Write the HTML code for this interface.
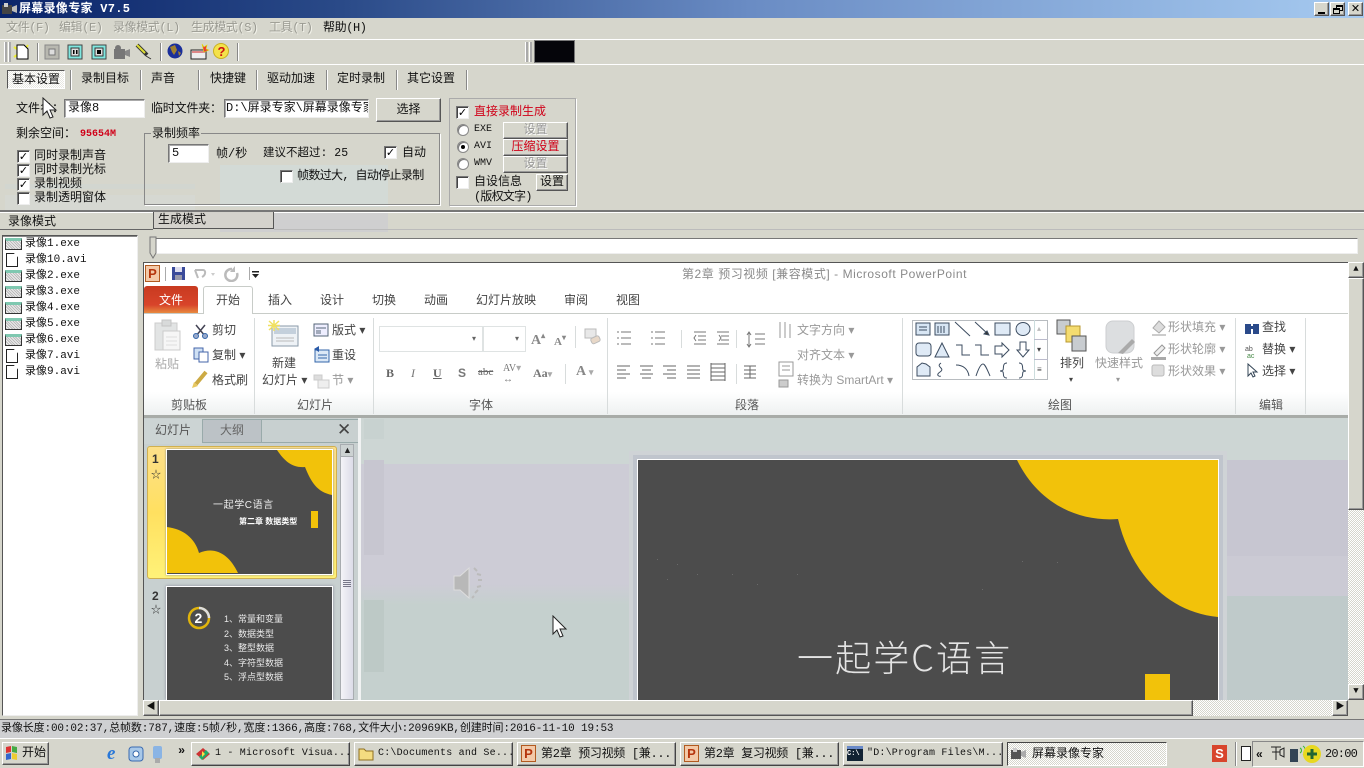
<!DOCTYPE html>
<html><head><meta charset="utf-8"><style>
*{box-sizing:border-box}
html,body{margin:0;padding:0;width:1364px;height:768px;overflow:hidden;background:#d6d6cc}
body{position:relative;font:12px "Liberation Mono","WenQuanYi Zen Hei","Noto Sans CJK SC",monospace;color:#111}
.a,.t{position:absolute}
.t{white-space:nowrap;line-height:14px}
.g{color:#9a9a92;text-shadow:1px 1px 0 #f2f2ea;letter-spacing:-.4px}
.r{color:#d00018}
.s{font-family:"Liberation Sans","Noto Sans CJK SC",sans-serif;color:#444;line-height:14px;position:absolute;white-space:nowrap}
.l{color:#999}
.btn{position:absolute;background:#d6d6cc;border:1px solid;border-color:#fff #555 #555 #fff;box-shadow:inset -1px -1px 0 #999;text-align:center}
.in{position:absolute;background:#fff;border:1px solid;border-color:#777 #eee #eee #777;box-shadow:inset 1px 1px 0 #aaa;padding-left:3px;line-height:16px}
.cb{position:absolute;width:13px;height:13px;background:#fff;border:1px solid;border-color:#777 #eee #eee #777;box-shadow:inset 1px 1px 0 #444;font:bold 11px/11px "DejaVu Sans",sans-serif;text-align:center;color:#000}
.rd{position:absolute;width:12px;height:12px;border-radius:50%;background:#fff;border:1px solid #888;box-shadow:inset 1px 1px 0 #777}
.sep{position:absolute;width:1px;background:#888;box-shadow:1px 0 0 #fff}
.tb{position:absolute;top:742px;height:24px;background:#d6d6cc;border:1px solid;border-color:#fff #444 #444 #fff;box-shadow:inset -1px -1px 0 #999;line-height:22px;padding-left:23px;white-space:nowrap;font-size:12px;letter-spacing:-.3px;overflow:hidden}
.tl{font-size:10px;letter-spacing:.2px}
.gh{position:absolute}
.li{position:absolute;left:25px;height:14px;line-height:14px;font-size:11px;white-space:nowrap}
.ie{position:absolute;left:5px;width:17px;height:12px;border:1px solid #333;border-top:3px solid #7fc8b0;background:repeating-linear-gradient(45deg,#bbb 0 1px,#eee 1px 2px)}
.id{position:absolute;left:6px;width:12px;height:14px;border:1px solid #222;background:#fff;clip-path:polygon(0 0,65% 0,100% 30%,100% 100%,0 100%)}
</style></head><body>

<!-- ghost bits behind the panel -->
<div class="gh" style="left:5px;top:184px;width:190px;height:5px;background:#d2d6d0"></div>
<div class="gh" style="left:5px;top:195px;width:190px;height:15px;background:#d6d8d2"></div>
<div class="gh" style="left:220px;top:165px;width:168px;height:42px;background:#d3dad6"></div>
<div class="gh" style="left:220px;top:212px;width:168px;height:20px;background:#cfcfd0"></div>

<!-- title bar -->
<div class="a" style="left:0;top:0;width:1364px;height:18px;background:linear-gradient(90deg,#0a246a 0,#2a4a88 25%,#6a8cc4 55%,#a6caf0 100%)"></div>
<svg class="a" style="left:1px;top:1px" width="17" height="16"><rect x="1" y="4" width="10" height="9" fill="#444"/><rect x="3" y="2" width="4" height="4" fill="#ccc"/><path d="M11 6l5-2v8l-5-2z" fill="#bbb"/></svg>
<div class="t" style="left:19px;top:2px;color:#fff;font-weight:bold;font-size:12px;letter-spacing:.3px">屏幕录像专家 V7.5</div>
<div class="btn" style="left:1314px;top:2px;width:15px;height:14px"><div class="a" style="left:3px;top:9px;width:7px;height:2px;background:#000"></div></div>
<div class="btn" style="left:1330px;top:2px;width:15px;height:14px"><div class="a" style="left:5px;top:2px;width:7px;height:6px;border:1px solid #000;border-top-width:2px"></div><div class="a" style="left:2px;top:5px;width:7px;height:6px;border:1px solid #000;border-top-width:2px;background:#d6d6cc"></div></div>
<div class="btn" style="left:1348px;top:2px;width:15px;height:14px;font:bold 11px/12px 'DejaVu Sans',sans-serif;color:#000">✕</div>

<!-- menu -->
<div class="t g" style="left:6px;top:21px">文件(F)</div>
<div class="t g" style="left:59px;top:21px">编辑(E)</div>
<div class="t g" style="left:113px;top:21px">录像模式(L)</div>
<div class="t g" style="left:191px;top:21px">生成模式(S)</div>
<div class="t g" style="left:269px;top:21px">工具(T)</div>
<div class="t" style="left:323px;top:21px;letter-spacing:-.4px">帮助(H)</div>

<!-- toolbar -->
<div class="a" style="left:0;top:39px;width:1364px;height:1px;background:#fff"></div>
<div class="a" style="left:0;top:64px;width:1364px;height:1px;background:#fff"></div>
<div class="a" style="left:5px;top:42px;width:2px;height:20px;background:#aaa;box-shadow:-1px 0 0 #fff"></div>
<div class="a" style="left:9px;top:42px;width:2px;height:20px;background:#aaa;box-shadow:-1px 0 0 #fff"></div>
<svg class="a" style="left:12px;top:42px" width="220" height="20">
<path d="M2 5l3 2M2 15l3-2M16 3l-2 3" stroke="#ee3" stroke-width="2"/><path d="M5 3h7l4 4v10H5z" fill="#fff" stroke="#000"/>
<rect x="33" y="3" width="14" height="14" fill="#b8b8b0" stroke="#888"/><rect x="37" y="7" width="6" height="6" fill="#ddd" stroke="#777"/>
<rect x="56" y="3" width="14" height="14" fill="#7fe8e0" stroke="#444"/><rect x="59" y="6" width="8" height="8" fill="#ddd" stroke="#333"/><rect x="61" y="8" width="1.5" height="4" fill="#000"/><rect x="64" y="8" width="1.5" height="4" fill="#000"/>
<rect x="80" y="3" width="14" height="14" fill="#7fe8e0" stroke="#444"/><rect x="83" y="6" width="8" height="8" fill="#ddd" stroke="#333"/><rect x="85" y="8" width="4" height="4" fill="#000"/>
<rect x="102" y="7" width="11" height="10" fill="#777"/><circle cx="106" cy="6" r="3" fill="#777"/><path d="M113 9l5-2v8l-5-2z" fill="#888"/>
<path d="M125 3l10 10" stroke="#333" stroke-width="4"/><path d="M125 3l8 8" stroke="#dd3" stroke-width="2"/><path d="M134 14l5 3" stroke="#333"/>
<circle cx="163" cy="9" r="7.5" fill="#1a2e9a"/><path d="M158 5l5-2 2 5-3 5-2-3zM166 9l3 2-2 3z" fill="#a08030"/>
<rect x="179" y="8" width="15" height="9" fill="#eee" stroke="#222"/><path d="M180 10h13" stroke="#c22"/><path d="M190 2l2 3 3-2-1 4 3 1-5 2z" fill="#e33" stroke="#dd0" stroke-width=".6"/>
<circle cx="209" cy="9" r="7.5" fill="#f4e24a" stroke="#c8b020"/><text x="205.5" y="14" font-family="Liberation Sans" font-weight="bold" font-size="13" fill="#c11">?</text>
</svg>
<div class="sep" style="left:37px;top:43px;height:18px"></div>
<div class="sep" style="left:160px;top:43px;height:18px"></div>
<div class="sep" style="left:237px;top:43px;height:18px"></div>
<div class="a" style="left:526px;top:42px;width:2px;height:20px;background:#aaa;box-shadow:-1px 0 0 #fff"></div>
<div class="a" style="left:530px;top:42px;width:2px;height:20px;background:#aaa;box-shadow:-1px 0 0 #fff"></div>
<div class="a" style="left:534px;top:40px;width:41px;height:23px;background:#05050a;border:1px solid #777"></div>

<!-- tabs -->
<div class="a" style="left:7px;top:70px;width:58px;height:19px;background:repeating-conic-gradient(#e8e8e2 0 25%,#fff 0 50%) 0 0/2px 2px;border:1px solid;border-color:#555 #fff #fff #555"></div>
<div class="t" style="left:12px;top:73px">基本设置</div>
<div class="t" style="left:81px;top:72px">录制目标</div>
<div class="t" style="left:151px;top:72px">声音</div>
<div class="t" style="left:210px;top:72px">快捷键</div>
<div class="t" style="left:267px;top:72px">驱动加速</div>
<div class="t" style="left:337px;top:72px">定时录制</div>
<div class="t" style="left:407px;top:72px">其它设置</div>
<div class="sep" style="left:70px;top:70px;height:20px"></div>
<div class="sep" style="left:140px;top:70px;height:20px"></div>
<div class="sep" style="left:198px;top:70px;height:20px"></div>
<div class="sep" style="left:256px;top:70px;height:20px"></div>
<div class="sep" style="left:326px;top:70px;height:20px"></div>
<div class="sep" style="left:396px;top:70px;height:20px"></div>
<div class="sep" style="left:466px;top:70px;height:20px"></div>

<!-- form -->
<div class="t" style="left:16px;top:102px">文件名：</div>
<div class="in" style="left:64px;top:99px;width:81px;height:19px">录像8</div>
<div class="t" style="left:151px;top:102px;letter-spacing:-.2px">临时文件夹：</div>
<div class="in" style="left:224px;top:99px;width:145px;height:19px;overflow:hidden;white-space:nowrap;padding-left:1px">D:\屏录专家\屏幕录像专家</div>
<div class="btn" style="left:376px;top:98px;width:65px;height:24px;line-height:22px">选择</div>
<svg class="a" style="left:42px;top:97px" width="16" height="24"><path d="M1 1v17l4-4 3 7 3-1-3-7h6z" fill="#fff" stroke="#222"/></svg>

<div class="t" style="left:16px;top:127px">剩余空间：</div>
<div class="t r" style="left:80px;top:128px;font-size:10px;font-weight:bold">95654M</div>

<div class="cb" style="left:17px;top:150px">✓</div><div class="t" style="left:34px;top:149px">同时录制声音</div>
<div class="cb" style="left:17px;top:164px">✓</div><div class="t" style="left:34px;top:163px">同时录制光标</div>
<div class="cb" style="left:17px;top:178px">✓</div><div class="t" style="left:34px;top:177px">录制视频</div>
<div class="cb" style="left:17px;top:192px"></div><div class="t" style="left:34px;top:191px">录制透明窗体</div>

<div class="a" style="left:144px;top:133px;width:296px;height:72px;border:1px solid #888;box-shadow:1px 1px 0 #fff"></div>
<div class="t" style="left:151px;top:127px;background:#d6d6cc;padding:0 1px">录制频率</div>
<div class="in" style="left:168px;top:144px;width:41px;height:19px">5</div>
<div class="t" style="left:216px;top:147px">帧/秒</div>
<div class="t" style="left:263px;top:147px;font-size:11.5px">建议不超过: 25</div>
<div class="cb" style="left:384px;top:146px">✓</div><div class="t" style="left:402px;top:146px">自动</div>
<div class="cb" style="left:280px;top:170px"></div><div class="t" style="left:297px;top:169px;letter-spacing:-.65px">帧数过大, 自动停止录制</div>

<div class="a" style="left:449px;top:98px;width:127px;height:108px;border:1px solid #aaa;box-shadow:1px 1px 0 #fff"></div>
<div class="cb" style="left:456px;top:106px">✓</div><div class="t r" style="left:474px;top:105px">直接录制生成</div>
<div class="rd" style="left:457px;top:124px"></div><div class="t" style="left:474px;top:123px;font-size:10px">EXE</div>
<div class="btn" style="left:503px;top:122px;width:65px;height:17px;line-height:15px;color:#999;text-shadow:1px 1px 0 #fff">设置</div>
<div class="rd" style="left:457px;top:141px"></div><div class="a" style="left:461px;top:145px;width:4px;height:4px;border-radius:50%;background:#000"></div><div class="t" style="left:474px;top:140px;font-size:10px">AVI</div>
<div class="btn r" style="left:503px;top:139px;width:65px;height:17px;line-height:15px">压缩设置</div>
<div class="rd" style="left:457px;top:158px"></div><div class="t" style="left:474px;top:157px;font-size:10px">WMV</div>
<div class="btn" style="left:503px;top:156px;width:65px;height:17px;line-height:15px;color:#999;text-shadow:1px 1px 0 #fff">设置</div>
<div class="cb" style="left:456px;top:176px"></div><div class="t" style="left:474px;top:175px">自设信息</div>
<div class="btn" style="left:536px;top:174px;width:32px;height:17px;line-height:15px">设置</div>
<div class="t" style="left:474px;top:190px;letter-spacing:-.8px">(版权文字)</div>

<!-- panel tabs -->
<div class="a" style="left:0;top:210px;width:1364px;height:2px;background:#777;box-shadow:0 1px 0 #fff"></div>
<div class="a" style="left:153px;top:212px;width:121px;height:17px;border:1px solid #555;border-top:0;background:#d4d2cc"></div>
<div class="t" style="left:158px;top:213px">生成模式</div>
<div class="t" style="left:8px;top:215px">录像模式</div>
<div class="a" style="left:0;top:229px;width:153px;height:1px;background:#666"></div>
<div class="a" style="left:274px;top:229px;width:1090px;height:1px;background:#bbb"></div>

<!-- left list -->
<div class="a" style="left:2px;top:235px;width:136px;height:481px;background:#fff;border:1px solid;border-color:#555 #eee #eee #555;box-shadow:inset 0 1px 0 #888"></div>
<div class="ie" style="top:238px"></div><div class="li" style="top:237px">录像1.exe</div>
<div class="id" style="top:253px"></div><div class="li" style="top:253px">录像10.avi</div>
<div class="ie" style="top:270px"></div><div class="li" style="top:269px">录像2.exe</div>
<div class="ie" style="top:286px"></div><div class="li" style="top:285px">录像3.exe</div>
<div class="ie" style="top:302px"></div><div class="li" style="top:301px">录像4.exe</div>
<div class="ie" style="top:318px"></div><div class="li" style="top:317px">录像5.exe</div>
<div class="ie" style="top:334px"></div><div class="li" style="top:333px">录像6.exe</div>
<div class="id" style="top:349px"></div><div class="li" style="top:349px">录像7.avi</div>
<div class="id" style="top:365px"></div><div class="li" style="top:365px">录像9.avi</div>

<!-- timeline -->
<div class="a" style="left:155px;top:238px;width:1203px;height:16px;background:#fff;border:1px solid;border-color:#777 #eee #eee #777"></div>
<svg class="a" style="left:149px;top:236px" width="9" height="24"><path d="M1 1h6v16l-3 5-3-5z" fill="#d6d6cc" stroke="#777"/></svg>

<!-- PowerPoint window -->
<div class="a" style="left:143px;top:262px;width:1205px;height:438px;background:#ccd4d4;border-left:1px solid #555;border-top:1px solid #555"></div>
<div class="a" style="left:144px;top:263px;width:1204px;height:152px;background:#fff"></div>
<div class="a" style="left:144px;top:415px;width:1204px;height:3px;background:#a8aca8"></div>

<!-- QAT -->
<div class="a" style="left:145px;top:265px;width:15px;height:17px;background:#f3c9a8;border:1px solid #b25a20;color:#b5340c;font:bold 13px/15px 'Liberation Sans',sans-serif;text-align:center">P</div>
<div class="a" style="left:165px;top:267px;width:1px;height:14px;background:#aaa"></div>
<svg class="a" style="left:171px;top:265px" width="90" height="17">
<rect x="1" y="2" width="13" height="13" fill="#3a4a9a"/><rect x="4" y="2" width="7" height="5" fill="#dde"/><rect x="4" y="10" width="7" height="5" fill="#99a"/>
<path d="M24 5l3 8M24 5h8c3 0 3 5-1 7" stroke="#bbb" stroke-width="2" fill="none"/><path d="M40 8l2 3 2-3z" fill="#ccc"/>
<path d="M61 4a6 6 0 1 0 5 4" stroke="#bbb" stroke-width="2.5" fill="none"/><path d="M64 1v6h-5z" fill="#bbb"/>
<rect x="78" y="2" width="1" height="13" fill="#aaa"/><rect x="81" y="6" width="7" height="1.5" fill="#222"/><path d="M81 9h7l-3.500 4z" fill="#222"/>
</svg>
<div class="s" style="left:682px;top:267px;color:#8a8a8a;font-size:12px;letter-spacing:.55px">第2章 预习视频 [兼容模式]  -  Microsoft PowerPoint</div>

<!-- ribbon tabs -->
<div class="a" style="left:144px;top:286px;width:54px;height:27px;border-radius:3px 3px 0 0;background:linear-gradient(#c83a20,#d8442a 70%,#e88a40)"></div>
<div class="s" style="left:159px;top:293px;color:#fff">文件</div>
<div class="a" style="left:144px;top:313px;width:1204px;height:1px;background:#c8ccc8"></div>
<div class="a" style="left:203px;top:286px;width:50px;height:28px;background:#fff;border:1px solid #c8ccc8;border-bottom:0;border-radius:3px 3px 0 0"></div>
<div class="s" style="left:216px;top:293px">开始</div>
<div class="s" style="left:268px;top:293px">插入</div>
<div class="s" style="left:320px;top:293px">设计</div>
<div class="s" style="left:372px;top:293px">切换</div>
<div class="s" style="left:424px;top:293px">动画</div>
<div class="s" style="left:476px;top:293px">幻灯片放映</div>
<div class="s" style="left:564px;top:293px">审阅</div>
<div class="s" style="left:616px;top:293px">视图</div>

<!-- ribbon group labels -->
<div class="a" style="left:144px;top:392px;width:1204px;height:23px;background:linear-gradient(#fff,#eef1f1)"></div>
<div class="s" style="left:171px;top:398px;color:#555">剪贴板</div>
<div class="s" style="left:297px;top:398px;color:#555">幻灯片</div>
<div class="s" style="left:469px;top:398px;color:#555">字体</div>
<div class="s" style="left:735px;top:398px;color:#555">段落</div>
<div class="s" style="left:1048px;top:398px;color:#555">绘图</div>
<div class="s" style="left:1259px;top:398px;color:#555">编辑</div>
<div class="a" style="left:254px;top:318px;width:1px;height:96px;background:#d8dcdc"></div>
<div class="a" style="left:373px;top:318px;width:1px;height:96px;background:#d8dcdc"></div>
<div class="a" style="left:607px;top:318px;width:1px;height:96px;background:#d8dcdc"></div>
<div class="a" style="left:902px;top:318px;width:1px;height:96px;background:#d8dcdc"></div>
<div class="a" style="left:1235px;top:318px;width:1px;height:96px;background:#d8dcdc"></div>
<div class="a" style="left:1305px;top:318px;width:1px;height:96px;background:#d8dcdc"></div>

<!-- clipboard -->
<svg class="a" style="left:150px;top:318px" width="36" height="36"><rect x="5" y="5" width="22" height="27" fill="#e2e4e4" stroke="#ccc"/><rect x="12" y="2" width="9" height="6" fill="#d8dada" stroke="#c4c4c4"/><rect x="13" y="13" width="17" height="19" fill="#f6f6f6" stroke="#ccc"/><path d="M16 19h11M16 23h11M16 27h11" stroke="#ddd"/></svg>
<div class="s l" style="left:155px;top:357px;color:#aaa">粘贴</div>
<svg class="a" style="left:191px;top:321px" width="20" height="72" fill="none"><path d="M5 4l9 11M14 4L5 15" stroke="#445" stroke-width="1.500"/><circle cx="5" cy="15" r="2.500" stroke="#36a" fill="#9ac"/><circle cx="14" cy="15" r="2.500" stroke="#36a" fill="#9ac"/><rect x="3" y="27" width="9" height="11" fill="#cfe0f4" stroke="#46a"/><rect x="8" y="31" width="9" height="10" fill="#fff" stroke="#46a"/><path d="M15 51L5 63" stroke="#ca4" stroke-width="4"/><path d="M3 61l4 4-6 2z" fill="#e8c860"/></svg>
<div class="s" style="left:212px;top:323px">剪切</div>
<div class="s" style="left:212px;top:348px">复制 ▾</div>
<div class="s" style="left:212px;top:373px">格式刷</div>

<!-- slides -->
<svg class="a" style="left:268px;top:320px" width="32" height="30"><rect x="4" y="6" width="26" height="20" fill="#eef2f6" stroke="#8a9aa8"/><rect x="6" y="8" width="22" height="6" fill="#c4d0dc"/><path d="M8 18h18M8 21h18" stroke="#bbb"/><path d="M1 1l10 9M11 1L1 10M6 0v11M0 5.500h12" stroke="#f0e060" stroke-width="1.500"/></svg>
<div class="s" style="left:272px;top:356px">新建</div>
<div class="s" style="left:262px;top:373px">幻灯片 ▾</div>
<svg class="a" style="left:313px;top:322px" width="18" height="68" fill="none"><rect x="1" y="2" width="14" height="12" fill="#eef" stroke="#567"/><path d="M3 6h10M3 9h5M3 11h5" stroke="#567"/><rect x="2" y="28" width="14" height="12" fill="#dbe8f6" stroke="#36a"/><path d="M1 27l5-3v6z" fill="#2a5aa8"/><path d="M5 33h9M5 36h9" stroke="#36a"/><rect x="1" y="53" width="8" height="5" fill="#ddd" stroke="#ccc"/><rect x="5" y="58" width="11" height="8" fill="#eee" stroke="#ccc"/></svg>
<div class="s" style="left:332px;top:323px">版式 ▾</div>
<div class="s" style="left:332px;top:348px">重设</div>
<div class="s l" style="left:332px;top:373px">节 ▾</div>

<!-- font -->
<div class="a" style="left:379px;top:326px;width:104px;height:26px;border:1px solid #dfe3e3"></div>
<div class="a" style="left:483px;top:326px;width:43px;height:26px;border:1px solid #dfe3e3"></div>
<div class="s" style="left:472px;top:332px;font-size:8px;color:#666">▾</div>
<div class="s" style="left:515px;top:332px;font-size:8px;color:#666">▾</div>
<div class="s" style="left:531px;top:331px;font:bold 14px 'Liberation Serif',serif;color:#888">A<span style="font-size:8px;vertical-align:6px">▴</span></div>
<div class="s" style="left:554px;top:333px;font:bold 11px 'Liberation Serif',serif;color:#888">A<span style="font-size:8px;vertical-align:5px">▾</span></div>
<svg class="a" style="left:584px;top:328px" width="18" height="18"><rect x="1" y="1" width="11" height="9" fill="#e8e8e8" stroke="#bbb"/><rect x="7" y="9" width="9" height="6" rx="2" fill="#e8d8c8" stroke="#bbb" transform="rotate(-25 11 12)"/></svg>
<div class="a" style="left:575px;top:326px;width:1px;height:22px;background:#d8dcdc"></div>
<div class="s" style="left:386px;top:366px;font:bold 12px 'Liberation Serif',serif;color:#666">B</div>
<div class="s" style="left:411px;top:366px;font:italic 12px 'Liberation Serif',serif;color:#777">I</div>
<div class="s" style="left:433px;top:366px;font:bold 12px 'Liberation Serif',serif;color:#666;text-decoration:underline">U</div>
<div class="s" style="left:458px;top:366px;font:bold 12px 'Liberation Sans',sans-serif;color:#777">S</div>
<div class="s" style="left:478px;top:366px;font:11px 'Liberation Serif',serif;color:#666;text-decoration:line-through">abc</div>
<div class="s" style="left:503px;top:363px;font:10px/11px 'Liberation Serif',serif;color:#777">AV<span style="color:#aaa">▾</span><br>↔</div>
<div class="s" style="left:533px;top:366px;font:bold 12px 'Liberation Serif',serif;color:#777">Aa<span style="color:#aaa;font-size:9px">▾</span></div>
<div class="a" style="left:565px;top:364px;width:1px;height:20px;background:#d8dcdc"></div>
<div class="s" style="left:576px;top:364px;font:bold 14px 'Liberation Serif',serif;color:#888">A <span style="color:#aaa;font-size:9px">▾</span></div>

<!-- paragraph -->
<svg class="a" style="left:616px;top:328px" width="158" height="60" fill="none" stroke="#777">
<path d="M5 4h10M5 10h10M5 16h10M1 4h2M1 10h2M1 16h2"/><path d="M39 4h10M39 10h10M39 16h10M35 4h2M35 10h2M35 16h2"/>
<path d="M78 4h12M82 8h8M82 12h8M78 16h12M80 7l-2 3 2 3"/><path d="M101 4h12M105 8h8M105 12h8M101 16h12M103 7l2 3-2 3"/>
<path d="M133 5v13M131 7l2-3 2 3M131 16l2 3 2-3M139 6h10M139 11h10M139 16h10"/>
<path d="M1 38h13M1 42h9M1 46h13M1 50h9" stroke="#666"/><path d="M24 38h13M26 42h9M24 46h13M26 50h9" stroke="#666"/><path d="M47 38h13M51 42h9M47 46h13M51 50h9" stroke="#666"/><path d="M71 38h13M71 42h13M71 46h13M71 50h13" stroke="#666"/><path d="M95 36h14M95 40h14M95 44h14M95 48h14M95 52h14M95 35v18M109 35v18" stroke="#666"/>
<path d="M128 38h12M128 42h12M128 46h12M128 50h12M134 38v12" stroke="#666"/>
</svg>
<div class="a" style="left:681px;top:330px;width:1px;height:18px;background:#d8dcdc"></div>
<div class="a" style="left:736px;top:330px;width:1px;height:18px;background:#d8dcdc"></div>
<div class="a" style="left:736px;top:364px;width:1px;height:20px;background:#d8dcdc"></div>
<svg class="a" style="left:777px;top:320px" width="20" height="68" fill="none" stroke="#999"><path d="M3 2v16M8 2v16M13 4v14"/><path d="M2 42h14v14H2zM5 46h8M5 50h8" /><rect x="2" y="60" width="9" height="7" fill="#ccc"/></svg>
<div class="s l" style="left:797px;top:323px">文字方向 ▾</div>
<div class="s l" style="left:797px;top:348px">对齐文本 ▾</div>
<div class="s l" style="left:797px;top:373px">转换为 SmartArt ▾</div>

<!-- shapes gallery -->
<div class="a" style="left:912px;top:320px;width:136px;height:60px;border:1px solid #b8bcc0;background:#fff"></div>
<div class="a" style="left:1034px;top:320px;width:14px;height:60px;border-left:1px solid #cdd"></div>
<div class="a" style="left:1034px;top:339px;width:14px;height:1px;background:#bbc"></div>
<div class="a" style="left:1034px;top:359px;width:14px;height:1px;background:#bbc"></div>
<div class="s" style="left:1037px;top:322px;font-size:8px;color:#bbb">▴</div>
<div class="s" style="left:1037px;top:343px;font-size:8px">▾</div>
<div class="s" style="left:1037px;top:363px;font-size:8px">≡</div>
<svg class="a" style="left:913px;top:321px" width="122" height="58" fill="none" stroke="#3c4c60">
<rect x="3" y="2" width="14" height="12" fill="#d8e6f4"/><path d="M6 6h8M6 9h8"/><rect x="22" y="2" width="14" height="12" fill="#d8e6f4"/><path d="M25 5v7M28 5v7M31 5v7"/>
<path d="M42 1l15 14M62 1l14 13"/><path d="M76 14l-5-1 3-3z" fill="#333"/><rect x="82" y="2" width="15" height="12" fill="#dfeaf6"/><ellipse cx="110" cy="8" rx="7" ry="6.500" fill="#dfeaf6"/>
<rect x="3" y="22" width="15" height="13" rx="3" fill="#dfeaf6"/><path d="M22 36l7-14 7 14z" fill="#dfeaf6"/><path d="M43 24h6v10h8M62 24h6v10h8"/><path d="M82 25h7v-3l7 7-7 7v-3h-7z" fill="#fff"/><path d="M107 21h6v8h3l-6 7-6-7h3z" fill="#fff"/>
<path d="M4 55V46l5-4 4 1 4 3v9z" fill="#dfeaf6"/><path d="M28 42c-6 4 5 5-1 9s2 5 0 4"/><path d="M43 44c7 0 12 4 13 11M63 55c3-9 5-12 7-12s4 5 7 12"/><path d="M94 42c-5 0-3 6-4 7-1 1-3 1-3 1 0 0 2 0 3 1s-1 6 4 6M106 42c5 0 3 6 4 7 1 1 3 1 3 1s-2 0-3 1 1 6-4 6"/>
</svg>
<svg class="a" style="left:1056px;top:319px" width="32" height="34"><rect x="1" y="1" width="13" height="14" fill="#c8ccd0" stroke="#555"/><rect x="10" y="7" width="14" height="16" fill="#f4dc70" stroke="#b89830"/><rect x="16" y="17" width="14" height="15" fill="#c8ccd0" stroke="#555"/></svg>
<div class="s" style="left:1060px;top:356px">排列</div>
<div class="s" style="left:1069px;top:373px;font-size:8px">▾</div>
<svg class="a" style="left:1104px;top:320px" width="34" height="36"><rect x="2" y="1" width="28" height="32" rx="7" fill="#dcdee0" stroke="#ccced0"/><path d="M14 33l14-14 3 3-12 12z" fill="#aaa"/></svg>
<div class="s l" style="left:1095px;top:356px">快速样式</div>
<div class="s l" style="left:1116px;top:373px;font-size:8px">▾</div>
<svg class="a" style="left:1150px;top:319px" width="18" height="60"><path d="M3 9l6-7 6 6-6 6z" fill="#ddd" stroke="#aaa"/><rect x="2" y="15" width="14" height="2" fill="#ccc"/><path d="M4 34l8-8 3 3-8 8z" fill="#eee" stroke="#999"/><rect x="1" y="38" width="15" height="3" fill="#aaa"/><rect x="2" y="46" width="12" height="11" rx="2" fill="#ddd" stroke="#bbb"/></svg>
<div class="s l" style="left:1168px;top:320px">形状填充 ▾</div>
<div class="s l" style="left:1168px;top:342px">形状轮廓 ▾</div>
<div class="s l" style="left:1168px;top:364px">形状效果 ▾</div>

<!-- edit -->
<svg class="a" style="left:1244px;top:320px" width="17" height="58" fill="none"><rect x="1" y="4" width="6" height="10" fill="#2a4a8a"/><rect x="9" y="4" width="6" height="10" fill="#2a4a8a"/><rect x="6" y="6" width="4" height="3" fill="#2a4a8a"/><text x="1" y="31" font-family="Liberation Sans" font-size="7" fill="#555" stroke="none">ab</text><text x="3" y="38" font-family="Liberation Sans" font-size="7" fill="#484" stroke="none">ac</text><path d="M4 44v12l3-3 2 4 2-1-2-4h4z" fill="#fff" stroke="#345"/></svg>
<div class="s" style="left:1262px;top:320px">查找</div>
<div class="s" style="left:1262px;top:342px">替换 ▾</div>
<div class="s" style="left:1262px;top:364px">选择 ▾</div>

<!-- canvas tones -->
<div class="a" style="left:360px;top:418px;width:988px;height:282px;background:#cdd6d4"></div>
<div class="a" style="left:361px;top:464px;width:268px;height:141px;background:linear-gradient(#cdccd6 0,#cdccd6 85%,#c5d0ce 100%)"></div>
<div class="a" style="left:361px;top:605px;width:268px;height:95px;background:#c5d0ce"></div>
<div class="a" style="left:364px;top:419px;width:20px;height:20px;background:#c8d2d0"></div>
<div class="a" style="left:364px;top:460px;width:20px;height:95px;background:#c7c6d0"></div>
<div class="a" style="left:364px;top:600px;width:20px;height:72px;background:#bdc9c6"></div>
<div class="a" style="left:1226px;top:460px;width:122px;height:100px;background:#c7c6d1"></div>
<div class="a" style="left:1226px;top:556px;width:122px;height:40px;background:#cbcad4"></div>
<div class="a" style="left:1226px;top:596px;width:122px;height:104px;background:#bfcaca"></div>
<div class="a" style="left:629px;top:451px;width:598px;height:249px;background:#cfd3d6"></div>
<div class="a" style="left:633px;top:455px;width:590px;height:245px;background:#c0c5cd"></div>

<!-- main slide -->
<div class="a" style="left:637px;top:459px;width:582px;height:241px;background:#4c4c4c;border:1px solid #fff;border-bottom:0;overflow:hidden"></div>
<svg class="a" style="left:637px;top:459px" width="582" height="241"><path d="M380 1C402 46 443 63 481 60C493 111 528 153 581 158V1z" fill="#f2c20a"/><rect x="508" y="215" width="25" height="26" fill="#f2c20a"/><g fill="#6a6a6a"><rect x="20" y="100" width="1" height="1"/><rect x="40" y="105" width="1" height="1"/><rect x="60" y="115" width="1" height="1"/><rect x="30" y="120" width="1" height="1"/><rect x="95" y="115" width="1" height="1"/><rect x="120" y="125" width="1" height="1"/><rect x="160" y="115" width="1" height="1"/><rect x="385" y="102" width="1" height="1"/><rect x="420" y="103" width="1" height="1"/><rect x="345" y="130" width="1" height="1"/></g></svg>
<div class="a" style="left:797px;top:633px;font:300 36px/46px 'Noto Sans CJK SC',sans-serif;color:#e4e4e4;white-space:nowrap;letter-spacing:2.1px">一起学C语言</div>

<!-- speaker -->
<svg class="a" style="left:450px;top:562px" width="34" height="40" fill="none"><path d="M4 14h6l9-8v30l-9-8H4z" fill="#b8b8b8" stroke="#ddd"/><path d="M24 6l3 3M27 12l4 1M28 18h4M27 25l4-1M25 31l3-3M22 36l2-2" stroke="#bbb" stroke-width="2"/></svg>
<svg class="a" style="left:552px;top:615px" width="16" height="24"><path d="M1 1v18l4-4 3 7 3-1-3-7h6z" fill="#fff" stroke="#222"/></svg>

<!-- slide panel -->
<div class="a" style="left:144px;top:418px;width:214px;height:282px;background:#c8d0d0"></div>
<div class="a" style="left:144px;top:419px;width:58px;height:24px;background:#ccd4d4"></div>
<div class="a" style="left:202px;top:419px;width:60px;height:24px;background:#bcc2c6;border:1px solid #9aa"></div>
<div class="a" style="left:144px;top:442px;width:214px;height:1px;background:#9aa"></div>
<div class="a" style="left:144px;top:442px;width:58px;height:2px;background:#ccd4d4"></div>
<div class="a" style="left:202px;top:419px;width:156px;height:1px;background:#9aa"></div>
<div class="s" style="left:155px;top:423px;color:#555;font-size:12px">幻灯片</div>
<div class="s" style="left:220px;top:423px;color:#666;font-size:12px">大纲</div>
<div class="s" style="left:337px;top:422px;font:bold 17px/16px 'DejaVu Sans',sans-serif;color:#444">✕</div>
<div class="a" style="left:358px;top:418px;width:3px;height:282px;background:#f0f2f2"></div>

<div class="a" style="left:147px;top:446px;width:190px;height:133px;border:1px solid #d0b050;border-radius:3px;background:linear-gradient(#fde08a,#ffe060 50%,#fff278)"></div>
<div class="s" style="left:152px;top:452px;font-weight:bold;font-size:12px;color:#333">1</div>
<div class="s" style="left:151px;top:469px;font-size:10px;color:#333">☆</div>
<div class="a" style="left:166px;top:449px;width:167px;height:126px;background:#4c4c4c;border:1px solid #fff;box-shadow:0 0 2px #888"></div>
<svg class="a" style="left:167px;top:450px" width="165" height="124"><path d="M110 0C118 12 126 18 138 17C144 32 150 42 165 45V0zM0 77C16 79 28 88 32 103C48 96 62 104 71 123H0z" fill="#f2c20a"/><rect x="144" y="61" width="7" height="17" fill="#f2c20a"/></svg>
<div class="s" style="left:213px;top:499px;color:#eee;font-size:10px;letter-spacing:.6px">一起学C语言</div>
<div class="s" style="left:239px;top:515px;color:#fff;font-size:8px;font-weight:bold">第二章 数据类型</div>

<div class="s" style="left:152px;top:589px;font-weight:bold;font-size:12px;color:#333">2</div>
<div class="s" style="left:151px;top:604px;font-size:10px;color:#333">☆</div>
<div class="a" style="left:166px;top:586px;width:167px;height:114px;background:#4c4c4c;border:1px solid #fff;border-bottom:0;box-shadow:0 0 3px #889"></div>
<svg class="a" style="left:186px;top:606px" width="26" height="26"><circle cx="13" cy="12" r="10" fill="none" stroke="#e0b40c" stroke-width="2.500"/><path d="M13 2a10 10 0 0 1 10 10" stroke="#ddd" stroke-width="2.500" fill="none"/><text x="8.500" y="17" font-family="Liberation Sans" font-weight="bold" font-size="14" fill="#fff">2</text></svg>
<div class="s" style="left:224px;top:612px;color:#e8e8e8;font-size:9px;line-height:14.500px">1、常量和变量<br>2、数据类型<br>3、整型数据<br>4、字符型数据<br>5、浮点型数据</div>

<!-- thumb scrollbar -->
<div class="a" style="left:340px;top:444px;width:14px;height:256px;background:linear-gradient(90deg,#f4f4f8,#dcdce8);border:1px solid #a8acb0"></div>
<div class="a" style="left:340px;top:444px;width:14px;height:13px;background:#ccd2d2;border:1px solid #a8acb0"></div>
<div class="s" style="left:343px;top:445px;font-size:9px;line-height:11px;color:#222">▲</div>
<svg class="a" style="left:343px;top:580px" width="9" height="8"><path d="M0 .5h8M0 2.500h8M0 4.500h8M0 6.500h8" stroke="#778"/></svg>

<!-- outer scrollbars -->
<div class="a" style="left:1348px;top:262px;width:16px;height:438px;background:repeating-conic-gradient(#d6d6cc 0 25%,#fff 0 50%) 0 0/2px 2px"></div>
<div class="btn" style="left:1348px;top:262px;width:16px;height:16px;font-size:9px;line-height:13px">▲</div>
<div class="btn" style="left:1348px;top:278px;width:16px;height:232px"></div>
<div class="btn" style="left:1348px;top:684px;width:16px;height:16px;font-size:9px;line-height:13px">▼</div>
<div class="a" style="left:143px;top:700px;width:1205px;height:16px;background:repeating-conic-gradient(#d6d6cc 0 25%,#fff 0 50%) 0 0/2px 2px"></div>
<div class="btn" style="left:143px;top:700px;width:16px;height:16px;font-size:9px;line-height:13px">◀</div>
<div class="btn" style="left:159px;top:700px;width:1034px;height:16px"></div>
<div class="btn" style="left:1332px;top:700px;width:16px;height:16px;font-size:9px;line-height:13px">▶</div>

<!-- status -->
<div class="a" style="left:0;top:719px;width:1364px;height:1px;background:#777"></div>
<div class="a" style="left:0;top:720px;width:1364px;height:18px;background:#cfd0d2"></div>
<div class="a" style="left:0;top:738px;width:1364px;height:1px;background:#fff"></div>
<div class="t" style="left:1px;top:722px;font-size:11px;letter-spacing:-.13px">录像长度:00:02:37,总帧数:787,速度:5帧/秒,宽度:1366,高度:768,文件大小:20969KB,创建时间:2016-11-10 19:53</div>

<!-- taskbar -->
<div class="a" style="left:0;top:739px;width:1364px;height:29px;background:#d6d6cc"></div>
<div class="btn" style="left:2px;top:742px;width:47px;height:23px;line-height:20px;padding-left:19px;text-align:left">开始</div>
<svg class="a" style="left:4px;top:745px" width="15" height="17"><path d="M2 2l5-1v6l-5 1z" fill="#d33"/><path d="M8 1l5 1v6l-5-1z" fill="#4a4"/><path d="M2 9l5-1v6l-5 1z" fill="#36c"/><path d="M8 8l5 1v6l-5-1z" fill="#ec3"/></svg>
<svg class="a" style="left:106px;top:744px" width="60" height="20"><text x="1" y="15" font-family="Liberation Serif" font-weight="bold" font-style="italic" font-size="19" fill="#2a78d8">e</text><rect x="23" y="3" width="14" height="14" rx="3" fill="#a8c8e8" stroke="#3a6ab0"/><circle cx="30" cy="10" r="3" fill="#fff" stroke="#36a"/><rect x="47" y="2" width="9" height="13" rx="2" fill="#8ab4e4"/><rect x="49" y="14" width="5" height="5" fill="#aaa"/></svg>
<div class="t" style="left:178px;top:744px;font-weight:bold">»</div>

<div class="tb tl" style="left:191px;width:159px">1 - Microsoft Visua...</div>
<svg class="a" style="left:195px;top:746px" width="16" height="16"><path d="M1 8l7-6 7 6-7 6z" fill="#c33"/><path d="M4 11L11 4l3 3-7 7z" fill="#2a6"/><path d="M7 5l3 3-3 3z" fill="#fd4"/></svg>
<div class="tb tl" style="left:354px;width:159px">C:\Documents and Se...</div>
<svg class="a" style="left:358px;top:746px" width="16" height="15"><path d="M1 3h5l2 2h7v9H1z" fill="#f4dc80" stroke="#907020"/></svg>
<div class="tb" style="left:517px;width:159px">第2章 预习视频 [兼...</div>
<div class="a" style="left:521px;top:745px;width:15px;height:17px;background:#f3c9a8;border:1px solid #b25a20;color:#b5340c;font:bold 13px/15px 'Liberation Sans',sans-serif;text-align:center">P</div>
<div class="tb" style="left:680px;width:159px">第2章 复习视频 [兼...</div>
<div class="a" style="left:684px;top:745px;width:15px;height:17px;background:#f3c9a8;border:1px solid #b25a20;color:#b5340c;font:bold 13px/15px 'Liberation Sans',sans-serif;text-align:center">P</div>
<div class="tb tl" style="left:843px;width:160px">"D:\Program Files\M...</div>
<div class="a" style="left:847px;top:746px;width:16px;height:15px;background:#123;border-top:3px solid #6a8ac8;color:#fff;font:bold 7px/11px 'Liberation Mono',monospace">C:\</div>
<div class="a" style="left:1007px;top:742px;width:160px;height:24px;background:repeating-conic-gradient(#d6d6cc 0 25%,#fff 0 50%) 0 0/2px 2px;border:1px solid;border-color:#444 #fff #fff #444;line-height:22px;padding-left:24px;white-space:nowrap">屏幕录像专家</div>
<svg class="a" style="left:1010px;top:746px" width="17" height="16"><rect x="1" y="4" width="10" height="9" fill="#555"/><rect x="3" y="2" width="4" height="4" fill="#ccc"/><path d="M11 6l5-2v8l-5-2z" fill="#aaa"/></svg>

<div class="a" style="left:1212px;top:745px;width:15px;height:17px;background:#d8452c;color:#fff;font:bold 13px/17px 'Liberation Sans',sans-serif;text-align:center">S</div>
<div class="sep" style="left:1235px;top:742px;height:24px"></div>
<div class="a" style="left:1241px;top:746px;width:10px;height:15px;border:1px solid #222;background:#fff"></div>
<div class="a" style="left:1252px;top:741px;width:112px;height:26px;border:1px solid;border-color:#888 #fff #fff #888;background:#d6d6cc"></div>
<div class="t" style="left:1256px;top:747px;font:bold 12px 'Liberation Sans',sans-serif">«</div>
<svg class="a" style="left:1268px;top:743px" width="60" height="22"><path d="M3 4h10M8 4v13M4 9h8M12 7l4-2v9l-4-2z" stroke="#222" fill="none"/><rect x="22" y="6" width="8" height="13" fill="#345"/><path d="M32 5c2 1 2 4 0 5M35 3c3 2 3 7 0 9" stroke="#3b3" fill="none"/><circle cx="44" cy="11" r="9" fill="#e8d820"/><path d="M44 6v10M39 11h10" stroke="#263" stroke-width="3"/></svg>
<div class="t" style="left:1325px;top:747px;font-size:12px;letter-spacing:-.8px">20:00</div>
</body></html>
